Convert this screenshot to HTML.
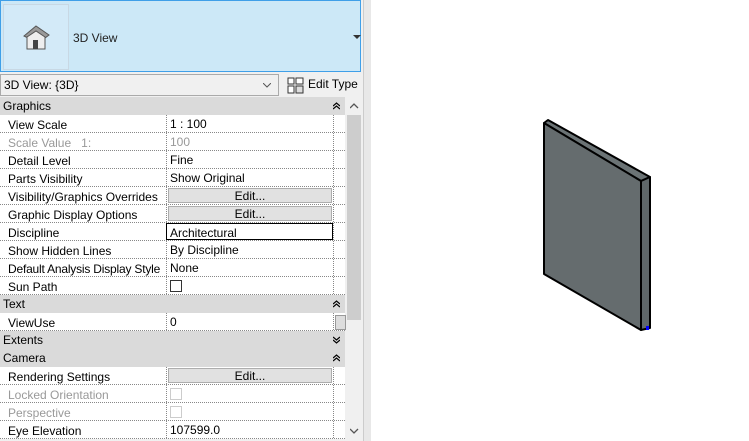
<!DOCTYPE html><html><head><style>
body{margin:0;width:749px;height:441px;overflow:hidden;background:#fff;font-family:"Liberation Sans",sans-serif;font-size:12px;color:#000;position:relative}
.a{position:absolute}
.hdr{left:0;top:0;width:361px;height:72px;background:#cce8f7;border:1px solid #3f9fe8;box-sizing:border-box}
.row{position:absolute;left:0;width:345px;height:18px;line-height:18px;border-bottom:1px dotted #888;box-sizing:border-box;background:#fff}
.n{position:absolute;left:8px;top:1px}
.v{position:absolute;left:166px;top:0;width:167px;height:17px;border-left:1px dotted #888;padding-left:3px;box-sizing:border-box;padding-top:1px;line-height:17px}
.x{position:absolute;left:333px;top:0;width:12px;height:17px;border-left:1px dotted #888}
.grp{position:absolute;left:0;width:345px;height:18px;line-height:19px;background:#dadada;padding-left:3px;box-sizing:border-box}
.grp svg{position:absolute;right:5px;top:5px}
.btn{position:absolute;left:168px;top:1px;width:164px;height:15px;background:#e1e1e1;border:1px solid #adadad;box-sizing:border-box;text-align:center;line-height:14px}
.cb{position:absolute;left:170px;top:3px;width:12px;height:12px;border:1px solid #333;box-sizing:border-box;background:#fff}
.gray{color:#999}
</style></head><body>
<div class="a" style="left:0;top:0;width:370px;height:441px;background:#f0f0f0"></div>
<div class="a hdr"></div>
<div class="a" style="left:3px;top:4px;width:64px;height:64px;border:1px solid #c8d8e4;background:#d3eaf8"></div>
<svg class="a" style="left:20px;top:22px" width="32" height="32" viewBox="0 0 32 32"><path d="M4 14 L16 4 L29 13 L25 16 L16 9 L8 16 Z" fill="#9a9a9a" stroke="#555" stroke-width="1"/><path d="M7 15 L16 9 L25 15 L25 27 L7 27Z" fill="#eee" stroke="#555"/><rect x="13" y="18" width="5" height="9" fill="#444"/></svg>
<div class="a" style="left:73px;top:31px;font-size:12px;color:#222">3D View</div>
<div class="a" style="left:353px;top:35px;width:0;height:0;border-left:4px solid transparent;border-right:4px solid transparent;border-top:4px solid #333"></div>
<div class="a" style="left:0;top:74px;width:279px;height:22px;border:1px solid #aaa;box-sizing:border-box;background:#f0f0f0;line-height:20px;padding-left:3px">3D View: {3D}<svg style="position:absolute;right:7px;top:8px" width="8" height="5"><path d="M0 0 L4 4 L8 0" fill="none" stroke="#555"/></svg></div>
<svg class="a" style="left:287px;top:77px" width="18" height="17"><rect x="1" y="1" width="6" height="6" fill="#fff" stroke="#333"/><rect x="9" y="1" width="7" height="6" fill="#fff" stroke="#333"/><rect x="1" y="9" width="6" height="7" fill="#fff" stroke="#333"/><rect x="9" y="9" width="7" height="7" fill="#ddd" stroke="#333"/></svg>
<div class="a" style="left:308px;top:77px;font-size:12px">Edit Type</div>
<div class="a" style="left:345px;top:97px;width:17px;height:344px;background:#f0f0f0"></div>
<div class="a" style="left:347px;top:115px;width:14px;height:205px;background:#cdcdcd"></div>
<svg class="a" style="left:350px;top:103px" width="9" height="6"><path d="M0 5 L4 1 L8 5" fill="none" stroke="#555" stroke-width="1.3"/></svg>
<svg class="a" style="left:350px;top:428px" width="9" height="6"><path d="M0 1 L4 5 L8 1" fill="none" stroke="#555" stroke-width="1.3"/></svg>
<div class="a" style="left:363px;top:0;width:7px;height:441px;background:#e8e8e8;border-left:1px solid #ccc"></div>

<div class="grp" style="top:97px">Graphics<svg width="7" height="8"><path d="M0 4 L3.5 1 L7 4 M0 7 L3.5 4 L7 7" fill="none" stroke="#000" stroke-width="1.2"/></svg></div>
<div class="row" style="top:115px"><span class="n">View Scale</span><span class="v">1 : 100</span><span class="x"></span></div>
<div class="row" style="top:133px"><span class="n gray">Scale Value &nbsp;&nbsp;1:</span><span class="v gray">100</span><span class="x"></span></div>
<div class="row" style="top:151px"><span class="n">Detail Level</span><span class="v">Fine</span><span class="x"></span></div>
<div class="row" style="top:169px"><span class="n">Parts Visibility</span><span class="v">Show Original</span><span class="x"></span></div>
<div class="row" style="top:187px"><span class="n">Visibility/Graphics Overrides</span><span class="v"></span><span class="btn">Edit...</span><span class="x"></span></div>
<div class="row" style="top:205px"><span class="n">Graphic Display Options</span><span class="v"></span><span class="btn">Edit...</span><span class="x"></span></div>
<div class="row" style="top:223px"><span class="n">Discipline</span><span class="v" style="border:1px solid #000;height:17px">Architectural</span><span class="x"></span></div>
<div class="row" style="top:241px"><span class="n">Show Hidden Lines</span><span class="v">By Discipline</span><span class="x"></span></div>
<div class="row" style="top:259px"><span class="n" style="letter-spacing:-0.2px">Default Analysis Display Style</span><span class="v">None</span><span class="x"></span></div>
<div class="row" style="top:277px"><span class="n">Sun Path</span><span class="v"></span><span class="cb"></span><span class="x"></span></div>
<div class="grp" style="top:295px">Text<svg width="7" height="8"><path d="M0 4 L3.5 1 L7 4 M0 7 L3.5 4 L7 7" fill="none" stroke="#000" stroke-width="1.2"/></svg></div>
<div class="row" style="top:313px"><span class="n">ViewUse</span><span class="v">0</span><span class="x"><span style="position:absolute;left:1px;top:2px;width:9px;height:13px;border:1px solid #999;background:#ddd"></span></span></div>
<div class="grp" style="top:331px">Extents<svg width="7" height="8"><path d="M0 1 L3.5 4 L7 1 M0 4 L3.5 7 L7 4" fill="none" stroke="#000" stroke-width="1.2"/></svg></div>
<div class="grp" style="top:349px">Camera<svg width="7" height="8"><path d="M0 4 L3.5 1 L7 4 M0 7 L3.5 4 L7 7" fill="none" stroke="#000" stroke-width="1.2"/></svg></div>
<div class="row" style="top:367px"><span class="n">Rendering Settings</span><span class="v"></span><span class="btn">Edit...</span><span class="x"></span></div>
<div class="row" style="top:385px"><span class="n gray">Locked Orientation</span><span class="v"></span><span class="cb" style="border-color:#ccc"></span><span class="x"></span></div>
<div class="row" style="top:403px"><span class="n gray">Perspective</span><span class="v"></span><span class="cb" style="border-color:#ccc"></span><span class="x"></span></div>
<div class="row" style="top:421px"><span class="n">Eye Elevation</span><span class="v">107599.0</span><span class="x"></span></div>

<svg class="a" style="left:370px;top:0" width="379" height="441"><g transform="translate(-370,0)" stroke="#000" stroke-width="2" stroke-linejoin="round">
<polygon points="544,123 548,120 650,177 641,181" fill="#6b7375"/>
<polygon points="641,181 650,177 650,328 641,330" fill="#5f6769"/>
<polygon points="544,123 641,181 641,330 544,274" fill="#656c6e"/>
</g><rect x="276" y="326" width="3" height="4" fill="#00f"/></svg>
</body></html>
